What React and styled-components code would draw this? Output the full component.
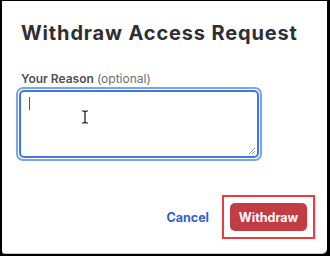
import React from 'react';
import styled, {createGlobalStyle} from 'styled-components';

const GlobalStyle = createGlobalStyle`
    html, body {
        margin: 0;
        padding: 0;
        background: #000;
    }
    body {
        width: 330px;
        height: 256px;
        overflow: hidden;
        font-family: Inter, "Liberation Sans", sans-serif;
    }
`;

const Frame = styled.div`
    width: 330px;
    height: 256px;
    padding: 1px 3px 2px 2px;
    box-sizing: border-box;
    background: #000;
`;

const Dialog = styled.div`
    height: 100%;
    box-sizing: border-box;
    background: #fff;
    border-radius: 0 0 5px 3px;
    border-bottom: 1px solid #c8c8c8;
    padding: 19px 18px 0 19px;
    display: flex;
    flex-direction: column;
`;

const Title = styled.h1`
    margin: 0;
    font-size: 20px;
    font-weight: 700;
    color: #2e2e33;
    letter-spacing: 0.85px;
    line-height: 26px;
`;

const Label = styled.label`
    margin-top: 25px;
    font-size: 12px;
    line-height: 16px;
    font-weight: 600;
    color: #505055;
`;

const Hint = styled.span`
    font-weight: 400;
    color: #6e6e73;
`;

const FieldWrap = styled.div`
    position: relative;
    margin-left: -5px;
    width: 246px;
    height: 74px;
    box-sizing: border-box;
    border: 2px solid #7aa4ee;
    border-radius: 7px;
    padding: 1px;
`;

const Area = styled.div`
    position: relative;
    height: 100%;
    box-sizing: border-box;
    border: 2px solid #3f78e0;
    border-radius: 5px;
    background: #fff;
`;

const Caret = styled.div`
    position: absolute;
    left: 8px;
    top: 5px;
    width: 1px;
    height: 13px;
    background: #555;
`;

const Pointer = styled.svg`
    position: absolute;
    left: 60px;
    top: 18px;
`;

const Grip = styled.svg`
    position: absolute;
    right: 1px;
    bottom: 1px;
`;

const Footer = styled.div`
    margin-top: auto;
    margin-bottom: 14px;
    display: flex;
    align-items: center;
    justify-content: flex-end;
    gap: 9px;
`;

const CancelButton = styled.button`
    border: none;
    background: none;
    padding: 0 4px;
    font-family: inherit;
    font-size: 12.5px;
    font-weight: 700;
    color: #2f64c8;
`;

const Highlight = styled.div`
    border: 2px solid #ec3a3f;
    padding: 6px 6px;
    margin-right: -6px;
`;

const WithdrawButton = styled.button`
    display: block;
    width: 77px;
    height: 28px;
    border: none;
    border-radius: 5px;
    background: #c23c44;
    color: #fff;
    font-family: inherit;
    font-size: 12.5px;
    font-weight: 700;
`;

export default function App() {
    return (
        <>
            <GlobalStyle />
            <Frame>
                <Dialog>
                    <Title>Withdraw Access Request</Title>
                    <Label>Your Reason <Hint>(optional)</Hint></Label>
                    <FieldWrap>
                        <Area>
                            <Caret />
                            <Pointer width="8" height="14" viewBox="0 0 8 14">
                                <path d="M1 1h2l1 1 1-1h2M4 2v10M1 13h2l1-1 1 1h2" fill="none" stroke="#111" strokeWidth="1.2" />
                            </Pointer>
                            <Grip width="8" height="8" viewBox="0 0 8 8">
                                <path d="M7 1L1 7M7 4L4 7" stroke="#999" strokeWidth="1" />
                            </Grip>
                        </Area>
                    </FieldWrap>
                    <Footer>
                        <CancelButton>Cancel</CancelButton>
                        <Highlight>
                            <WithdrawButton>Withdraw</WithdrawButton>
                        </Highlight>
                    </Footer>
                </Dialog>
            </Frame>
        </>
    );
}
